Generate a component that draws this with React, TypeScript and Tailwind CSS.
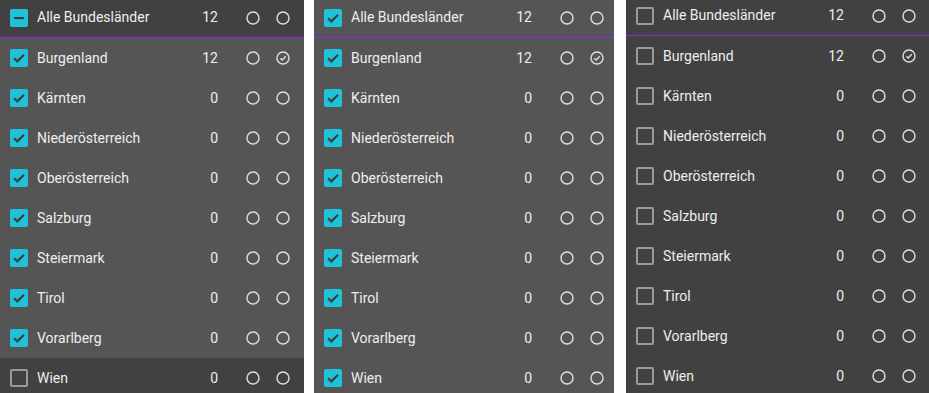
const LAENDER = [
  'Burgenland',
  'Kärnten',
  'Niederösterreich',
  'Oberösterreich',
  'Salzburg',
  'Steiermark',
  'Tirol',
  'Vorarlberg',
  'Wien',
]

type Mark = 'checked' | 'unchecked' | 'partial'

function Box({ mark }: { mark: Mark }) {
  if (mark === 'unchecked') {
    return <div className="w-[18px] h-[18px] shrink-0 rounded-[2px] border-2 border-[#9a9a9a]" />
  }
  return (
    <div className="w-[18px] h-[18px] shrink-0 rounded-[2px] bg-[#1ec3da] flex items-center justify-center">
      <svg width="18" height="18" viewBox="0 0 18 18">
        {mark === 'checked' ? (
          <path d="M4 9.2 L7.3 12.4 L14 5.7" fill="none" stroke="#3f3f3f" strokeWidth="2.2" />
        ) : (
          <rect x="4" y="8" width="10" height="2.2" fill="#3f3f3f" />
        )}
      </svg>
    </div>
  )
}

function Ring({ tick }: { tick?: boolean }) {
  return (
    <svg width="14" height="14" viewBox="0 0 14 14" className="shrink-0">
      <circle cx="7" cy="7" r="6" fill="none" stroke="#e0e0e0" strokeWidth="1.4" />
      {tick && <path d="M4.3 7.2 L6.2 9 L9.8 5.2" fill="none" stroke="#e0e0e0" strokeWidth="1.3" />}
    </svg>
  )
}

function Row({ name, count, mark, tick, header }: { name: string; count: number; mark: Mark; tick?: boolean; header?: boolean }) {
  const bg = mark === 'checked' ? 'bg-[#555555]' : 'bg-[#414141]'
  return (
    <div className={`${bg} h-[40px] flex items-center pl-[10px] shrink-0 ${header ? 'border-b border-[#9c22e6]' : ''}`}>
      <Box mark={mark} />
      <span className="ml-[9px] w-[150px] text-[14px] text-[#eeeeee] truncate">{name}</span>
      <span className="w-[31px] text-right text-[14px] text-[#eeeeee]">{count}</span>
      <div className="ml-[28px] flex items-center gap-[16px]">
        <Ring />
        <Ring tick={tick} />
      </div>
    </div>
  )
}

function Panel({ width, shift, headerMark, marks }: { width: string; shift: string; headerMark: Mark; marks: Mark[] }) {
  return (
    <div className={`${width} h-full overflow-hidden flex flex-col`}>
      <div className={`${shift} flex flex-col`}>
        <Row header name="Alle Bundesländer" count={12} mark={headerMark} />
        {LAENDER.map((l, i) => (
          <Row key={l} name={l} count={i === 0 ? 12 : 0} mark={marks[i]} tick={i === 0} />
        ))}
      </div>
    </div>
  )
}

export default function App() {
  const all = (m: Mark) => LAENDER.map(() => m)
  const first = LAENDER.map((_, i) => (i === 8 ? 'unchecked' : 'checked')) as Mark[]
  return (
    <div className="w-[929px] h-[393px] bg-white flex overflow-hidden" style={{ fontFamily: 'Roboto, "Liberation Sans", sans-serif' }}>
      <Panel width="w-[304px]" shift="-mt-[2px]" headerMark="partial" marks={first} />
      <div className="w-[10px] shrink-0" />
      <Panel width="w-[300px]" shift="-mt-[2px]" headerMark="checked" marks={all('checked')} />
      <div className="w-[12px] shrink-0" />
      <Panel width="w-[303px]" shift="-mt-[4px]" headerMark="unchecked" marks={all('unchecked')} />
    </div>
  )
}
